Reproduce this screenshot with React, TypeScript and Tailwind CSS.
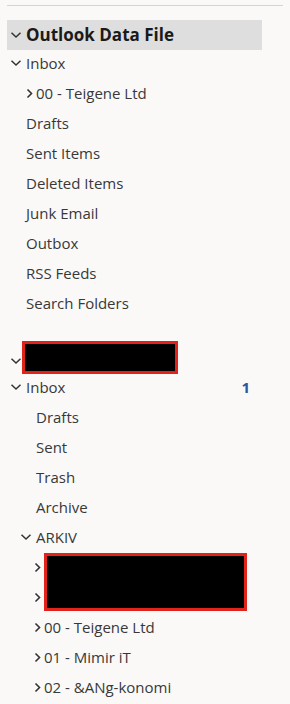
import React from "react";

const font = { fontFamily: '"Open Sans", "Noto Sans", sans-serif' };

function ChevronDown({ className = "" }: { className?: string }) {
  return (
    <svg width="12" height="8" viewBox="0 0 12 8" className={className}>
      <path d="M1.5 1.8 L6 6 L10.5 1.8" fill="none" stroke="#333" strokeWidth="1.5" />
    </svg>
  );
}

function ChevronRight({ className = "" }: { className?: string }) {
  return (
    <svg width="7" height="11" viewBox="0 0 7 11" className={className}>
      <path d="M1.5 1.5 L5.5 5.5 L1.5 9.5" fill="none" stroke="#333" strokeWidth="1.6" />
    </svg>
  );
}

function Row({
  indent,
  icon,
  label,
  count,
}: {
  indent: number;
  icon?: "down" | "right";
  label: string;
  count?: number;
}) {
  return (
    <div className="flex h-[30px] items-center pr-[40px]" style={{ paddingLeft: indent }}>
      <span className="flex w-[16px] shrink-0 items-center">
        {icon === "down" && <ChevronDown />}
        {icon === "right" && <ChevronRight className="ml-[6px]" />}
      </span>
      <span className="flex-1 text-[15px] text-[#383838]">{label}</span>
      {count !== undefined && (
        <span className="text-[15px] font-bold text-[#2b579a]">{count}</span>
      )}
    </div>
  );
}

export default function App() {
  return (
    <div className="h-[704px] w-[290px] overflow-hidden bg-[#faf9f8]" style={font}>
      <div className="ml-[7px] mr-[7px] pt-[5px]">
        <div className="h-px bg-[#d4d4d4]" />
      </div>

      <div className="ml-[7px] mt-[14px] flex h-[30px] w-[255px] items-center bg-[#dedede] pl-[3px]">
        <ChevronDown className="mr-[4px]" />
        <span className="text-[17px] font-bold text-[#1a1a1a]">Outlook Data File</span>
      </div>

      <div className="-mt-[2px]">
        <Row indent={10} icon="down" label="Inbox" />
        <Row indent={20} icon="right" label="00 - Teigene Ltd" />
        {["Drafts", "Sent Items", "Deleted Items", "Junk Email", "Outbox", "RSS Feeds", "Search Folders"].map(
          (l) => (
            <Row key={l} indent={10} label={l} />
          )
        )}
      </div>

      <div className="mt-[24px] flex h-[30px] items-center pl-[10px]">
        <ChevronDown className="mt-[8px]" />
        <div className="h-[33px] w-[156px] border-[3px] border-[#e0231b] bg-black" />
      </div>

      <Row indent={10} icon="down" label="Inbox" count={1} />
      {["Drafts", "Sent", "Trash", "Archive"].map((l) => (
        <Row key={l} indent={20} label={l} />
      ))}
      <Row indent={20} icon="down" label="ARKIV" />

      <div className="relative">
        <Row indent={28} icon="right" label="" />
        <Row indent={28} icon="right" label="" />
        <div className="absolute left-[44px] top-[1px] h-[58px] w-[203px] border-[3px] border-[#e0231b] bg-black" />
      </div>

      <Row indent={28} icon="right" label="00 - Teigene Ltd" />
      <Row indent={28} icon="right" label="01 - Mimir iT" />
      <Row indent={28} icon="right" label="02 - &ANg-konomi" />
    </div>
  );
}
